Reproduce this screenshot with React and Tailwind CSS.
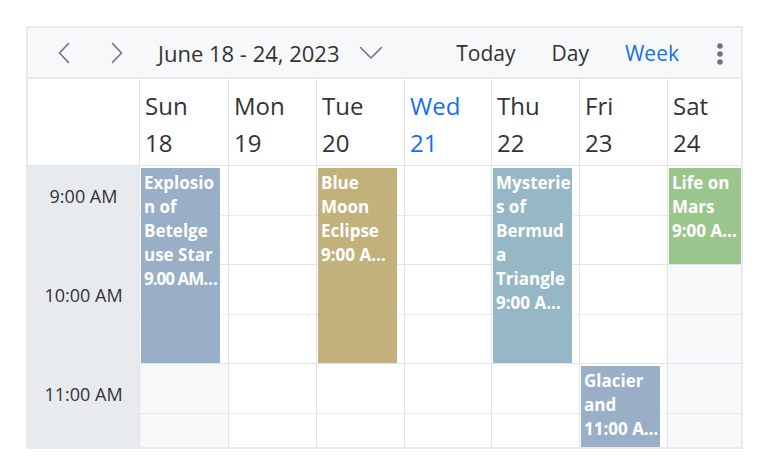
const days = [
  { name: 'Sun', date: 18 },
  { name: 'Mon', date: 19 },
  { name: 'Tue', date: 20 },
  { name: 'Wed', date: 21, today: true },
  { name: 'Thu', date: 22 },
  { name: 'Fri', date: 23 },
  { name: 'Sat', date: 24 },
];

const hours = ['9:00 AM', '10:00 AM', '11:00 AM'];

// index of the first half-hour slot, number of slots
const events = {
  Sun: { title: 'Explosion of Betelge\u200buse Star', time: '9.00 AM…', tight: true, start: 0, slots: 4, color: 'bg-[#99aec7]' },
  Tue: { title: 'Blue Moon Eclipse', time: '9:00 A…', start: 0, slots: 4, color: 'bg-[#c3b17c]' },
  Thu: { title: 'Mysteries of Bermuda Triangle', time: '9:00 A…', start: 0, slots: 4, color: 'bg-[#96b8c6]' },
  Fri: { title: 'Glacier and', time: '11:00 A…', start: 4, slots: 2, color: 'bg-[#99aec7]' },
  Sat: { title: 'Life on Mars', time: '9:00 A…', start: 0, slots: 2, color: 'bg-[#9ac68e]' },
};

// cells shaded as unavailable
const shaded = {
  Sun: [4, 5],
  Sat: [2, 3, 4, 5],
};

const cols = 'grid grid-cols-[111px_89px_88px_88px_87px_88px_88px_88px]';

function Chevron({ dir }) {
  return (
    <svg width="12" height="22" viewBox="0 0 12 22" fill="none" stroke="#6f747b" strokeWidth="1.6" strokeLinecap="round" strokeLinejoin="round">
      {dir === 'left' ? <path d="M10.5 1.5 L1.5 11 L10.5 20.5" /> : <path d="M1.5 1.5 L10.5 11 L1.5 20.5" />}
    </svg>
  );
}

function Toolbar() {
  return (
    <div className="flex h-[51px] items-center border-b-2 border-[#e8eaed] bg-[#f7f8fa] pl-[16px] pr-[18px] text-[#333]">
      <button className="flex h-[40px] w-[40px] items-center justify-center">
        <Chevron dir="left" />
      </button>
      <button className="ml-[13px] flex h-[40px] w-[40px] items-center justify-center">
        <Chevron dir="right" />
      </button>
      <button className="ml-[21px] flex items-center">
        <span className="text-[22px] leading-[30px]">June 18 - 24, 2023</span>
        <svg className="ml-[19px]" width="24" height="14" viewBox="0 0 24 14" fill="none" stroke="#6f747b" strokeWidth="1.6" strokeLinecap="round" strokeLinejoin="round">
          <path d="M1.5 1.5 L12 12 L22.5 1.5" />
        </svg>
      </button>
      <div className="ml-auto flex items-center gap-[36px] text-[21px] leading-[30px]">
        <button>Today</button>
        <button>Day</button>
        <button className="text-[#1570ef]">Week</button>
      </div>
      <button className="ml-[38px] mt-[2px]">
        <svg width="6" height="22" viewBox="0 0 6 22" fill="#6f747b">
          <circle cx="3" cy="3" r="2.8" />
          <circle cx="3" cy="11" r="2.8" />
          <circle cx="3" cy="19" r="2.8" />
        </svg>
      </button>
    </div>
  );
}

function Header() {
  return (
    <div className={`${cols} h-[87px] border-b border-[#e1e4e8]`}>
      <div />
      {days.map((d) => (
        <div
          key={d.name}
          className={`border-l border-[#e1e4e8] pl-[5px] pt-[8px] text-[24px] leading-[37px] ${d.today ? 'text-[#1570ef]' : 'text-[#333]'}`}
        >
          <div>{d.name}</div>
          <div>{d.date}</div>
        </div>
      ))}
    </div>
  );
}

function Event({ ev }) {
  return (
    <div
      className={`absolute left-[1px] w-[79px] ${ev.color} overflow-hidden pl-[3px] pr-[1px] pt-[3px] text-[17px] font-bold leading-[24px] text-white`}
      style={{ top: ev.start * 49.5 + 2, height: ev.slots * 49.5 - 3 }}
    >
      <div className="break-words">{ev.title}</div>
      <div className={`overflow-hidden whitespace-nowrap ${ev.tight ? 'tracking-[-1px]' : ''}`}>{ev.time}</div>
    </div>
  );
}

export default function App() {
  return (
    <div className="min-h-screen bg-white pl-[26px] pt-[26px]" style={{ fontFamily: '"Open Sans", "Noto Sans", sans-serif' }}>
      <div className="w-[717px] overflow-hidden border-2 border-[#e8eaed] bg-white">
        <Toolbar />
        <Header />
        <div className={`${cols} h-[281px] overflow-hidden`}>
          <div className="bg-[#e8ebee] text-[#333]">
            {hours.map((h) => (
              <div key={h} className="h-[99px] pt-[18px] text-center text-[18px] leading-[24px]">
                {h}
              </div>
            ))}
          </div>
          {days.map((d) => (
            <div key={d.name} className="relative border-l border-[#e1e4e8]">
              {[0, 1, 2, 3, 4, 5].map((i) => (
                <div
                  key={i}
                  className={`h-[49.5px] border-b ${i % 2 === 0 ? 'border-dotted border-[#d9dde2]' : 'border-[#e1e4e8]'} ${
                    (shaded[d.name] || []).includes(i) ? 'bg-[#f7f8fa]' : 'bg-white'
                  }`}
                />
              ))}
              {events[d.name] && <Event ev={events[d.name]} />}
            </div>
          ))}
        </div>
      </div>
    </div>
  );
}
